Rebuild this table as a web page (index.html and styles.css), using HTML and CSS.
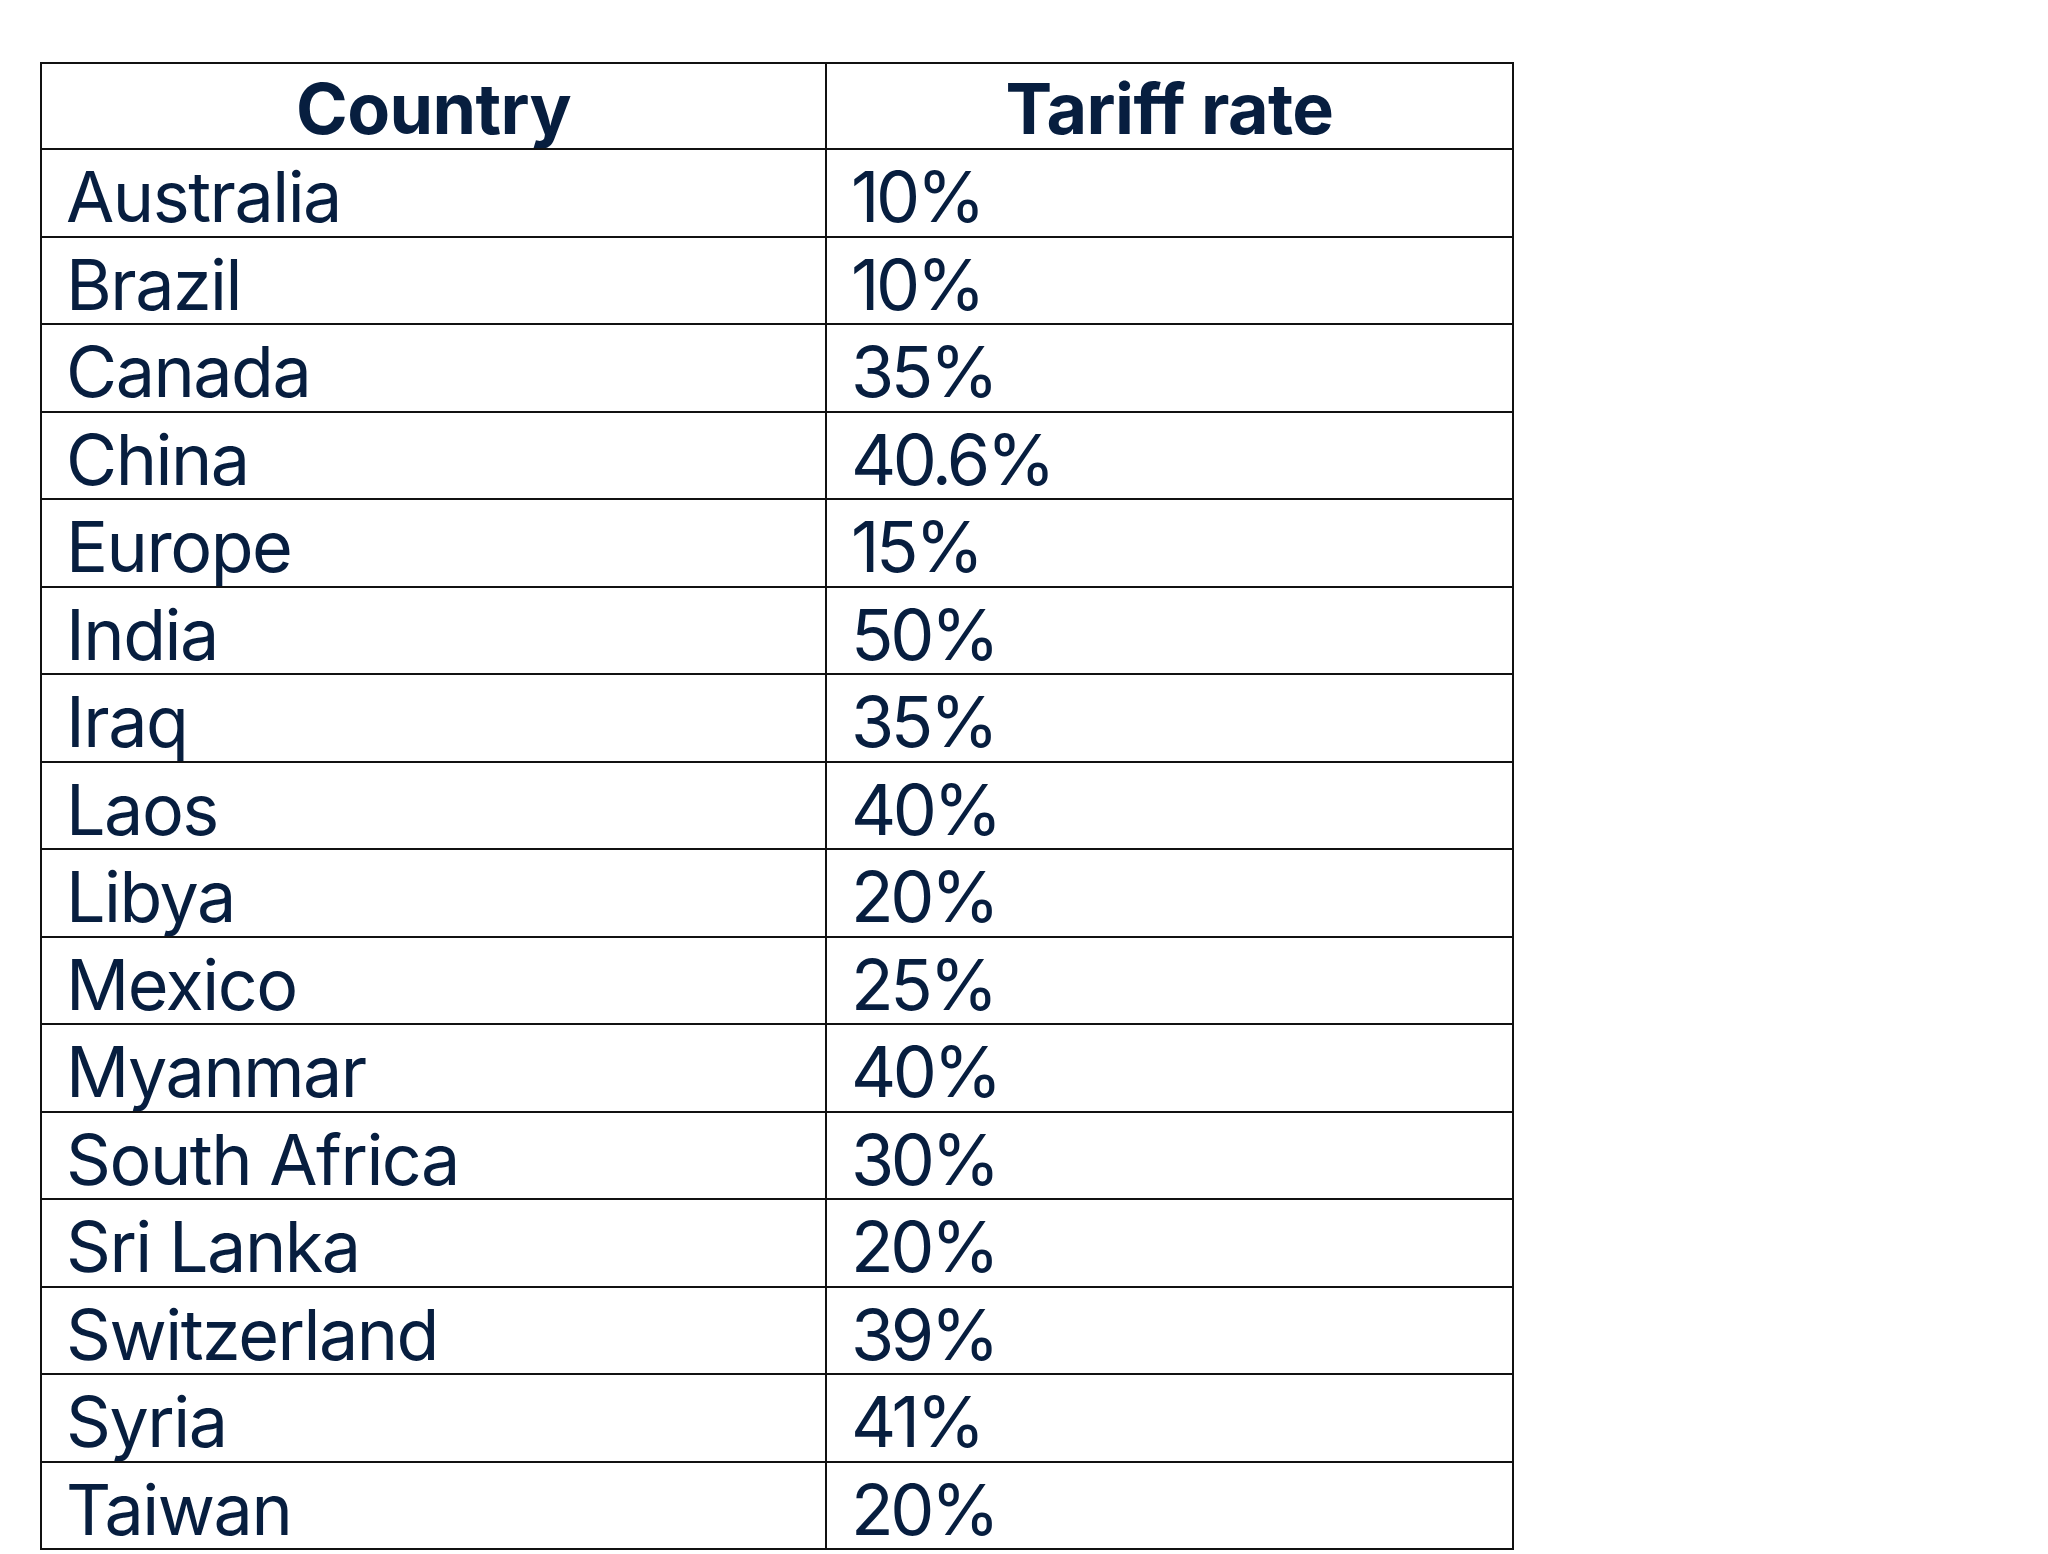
FILE: index.html
```html
<!DOCTYPE html>
<html lang="en">
<head>
<meta charset="utf-8">
<title>Tariff rates</title>
<link rel="stylesheet" href="styles.css">
</head>
<body>
<div class="tariff-table">
  <div class="cell head">Country</div>
  <div class="cell head">Tariff rate</div>
  <div class="cell">Australia</div><div class="cell num">10%</div>
  <div class="cell">Brazil</div><div class="cell num">10%</div>
  <div class="cell">Canada</div><div class="cell num">35%</div>
  <div class="cell">China</div><div class="cell num">40.6%</div>
  <div class="cell">Europe</div><div class="cell num">15%</div>
  <div class="cell">India</div><div class="cell num">50%</div>
  <div class="cell">Iraq</div><div class="cell num">35%</div>
  <div class="cell">Laos</div><div class="cell num">40%</div>
  <div class="cell">Libya</div><div class="cell num">20%</div>
  <div class="cell">Mexico</div><div class="cell num">25%</div>
  <div class="cell">Myanmar</div><div class="cell num">40%</div>
  <div class="cell">South Africa</div><div class="cell num">30%</div>
  <div class="cell">Sri Lanka</div><div class="cell num">20%</div>
  <div class="cell">Switzerland</div><div class="cell num">39%</div>
  <div class="cell">Syria</div><div class="cell num">41%</div>
  <div class="cell">Taiwan</div><div class="cell num">20%</div>
</div>
</body>
</html>
```

FILE: styles.css
```css
html, body {
  margin: 0;
  padding: 0;
  background: #ffffff;
}

body {
  font-family: "Inter", "Liberation Sans", sans-serif;
  color: #071e3f;
}

.tariff-table {
  display: grid;
  grid-template-columns: 785px 687px;
  grid-template-rows: 86px repeat(16, 87.5px);
  width: 1472px;
  margin: 62px 0 0 40px;
  border-top: 2px solid #111111;
  border-left: 2px solid #111111;
}

.cell {
  box-sizing: border-box;
  border-right: 2px solid #111111;
  border-bottom: 2px solid #111111;
  font-size: 70px;
  line-height: 70px;
  letter-spacing: -1.5px;
  padding: 12px 0 0 24px;
  white-space: nowrap;
  overflow: hidden;
}

.cell.num {
  letter-spacing: -3.4px;
}

.cell.head {
  font-weight: 700;
  letter-spacing: -0.6px;
  text-align: center;
  padding: 10px 0 0 0;
}
```
